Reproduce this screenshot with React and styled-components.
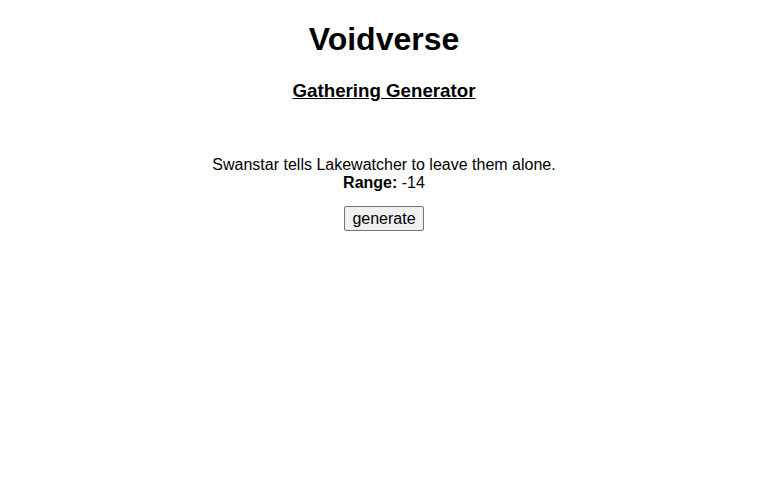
import React, { useState } from "react";
import styled, { createGlobalStyle } from "styled-components";

const GlobalStyle = createGlobalStyle`
  body {
    margin: 0;
    background: #ffffff;
    font-family: "Liberation Sans", Arial, sans-serif;
    color: #000000;
  }
`;

const Page = styled.div`
  display: flex;
  flex-direction: column;
  align-items: center;
  text-align: center;
  padding-top: 21px;
`;

const Title = styled.h1`
  margin: 0;
  font-size: 32px;
  line-height: 37px;
  font-weight: 700;
`;

const Subtitle = styled.h3`
  margin: 22px 0 0;
  font-size: 18.72px;
  line-height: 22px;
  font-weight: 700;
  text-decoration: underline;
`;

const Result = styled.div`
  margin-top: 54px;
  font-size: 16px;
  line-height: 18px;
`;

const Label = styled.b`
  font-weight: 700;
`;

const GenerateButton = styled.button`
  margin-top: 14px;
  font-family: "Liberation Sans", Arial, sans-serif;
  font-size: 16px;
  line-height: 19px;
  color: #000000;
  background: #efefef;
  border: 1px solid #767676;
  border-radius: 2px;
  padding: 2px 7px;
  cursor: pointer;

  &:hover {
    background: #e5e5e5;
  }
`;

const gatherings = [
  { text: "Swanstar tells Lakewatcher to leave them alone.", range: -14 },
  { text: "Mosspelt invites Emberfall to share a meal.", range: 6 },
  { text: "Driftwhisker warns Stonefang about the border.", range: -3 },
];

function App() {
  const [index, setIndex] = useState(0);
  const current = gatherings[index];

  const onGenerate = () => {
    setIndex((prev) => (prev + 1) % gatherings.length);
  };

  return (
    <>
      <GlobalStyle />
      <Page>
        <Title>Voidverse</Title>
        <Subtitle>Gathering Generator</Subtitle>
        <Result>
          <div>{current.text}</div>
          <div>
            <Label>Range:</Label> {current.range}
          </div>
        </Result>
        <GenerateButton onClick={onGenerate}>generate</GenerateButton>
      </Page>
    </>
  );
}

export default App;
